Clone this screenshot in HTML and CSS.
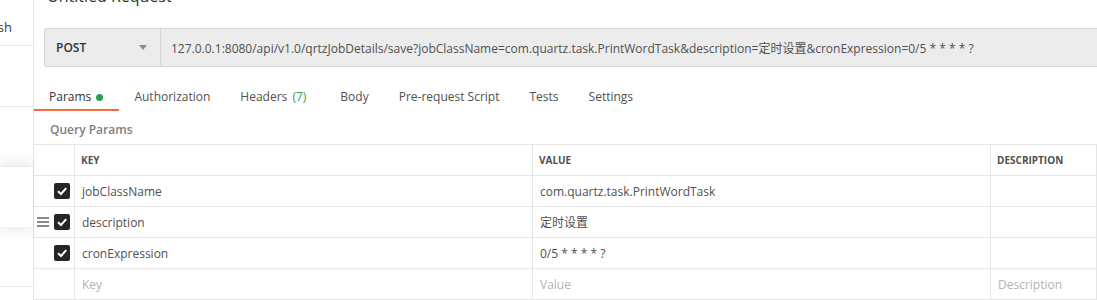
FILE: index.html
```html
<!DOCTYPE html>
<html lang="en">
<head>
  <meta charset="UTF-8">
  <title>Untitled Request</title>
  <link rel="stylesheet" href="styles.css">
</head>
<body>
  <div class="app">
    <!-- left sidebar, mostly hidden -->
    <aside class="sidebar">
      <div class="side-top"><span>Refresh</span></div>
      <div class="side-item"></div>
      <div class="side-gap"></div>
      <div class="side-card"></div>
      <div class="side-gap2"></div>
    </aside>

    <main class="main">
      <h2 class="title">Untitled Request</h2>

      <div class="urlbar">
        <div class="method">
          <span>POST</span>
          <i class="caret"></i>
        </div>
        <div class="url">127.0.0.1:8080/api/v1.0/qrtzJobDetails/save?jobClassName=com.quartz.task.PrintWordTask&amp;description=定时设置&amp;cronExpression=0/5 * * * * ?</div>
      </div>

      <ul class="tabs">
        <li class="active">Params <span class="dot"></span></li>
        <li>Authorization</li>
        <li>Headers <span class="count">(7)</span></li>
        <li>Body</li>
        <li>Pre-request Script</li>
        <li>Tests</li>
        <li>Settings</li>
      </ul>

      <div class="section-label">Query Params</div>

      <div class="params">
        <div class="cell head"></div>
        <div class="cell head">KEY</div>
        <div class="cell head">VALUE</div>
        <div class="cell head">DESCRIPTION</div>

        <div class="cell check"><span class="box"><svg viewBox="0 0 16 16" width="16" height="16"><rect width="16" height="16" rx="2" fill="#262626"/><path d="M4 8.2 L7 11 L12.2 5.2" stroke="#fff" stroke-width="2" fill="none"/></svg></span></div>
        <div class="cell">jobClassName</div>
        <div class="cell">com.quartz.task.PrintWordTask</div>
        <div class="cell"></div>

        <div class="cell check"><span class="handle"><i></i><i></i><i></i></span><span class="box"><svg viewBox="0 0 16 16" width="16" height="16"><rect width="16" height="16" rx="2" fill="#262626"/><path d="M4 8.2 L7 11 L12.2 5.2" stroke="#fff" stroke-width="2" fill="none"/></svg></span></div>
        <div class="cell">description</div>
        <div class="cell">定时设置</div>
        <div class="cell"></div>

        <div class="cell check"><span class="box"><svg viewBox="0 0 16 16" width="16" height="16"><rect width="16" height="16" rx="2" fill="#262626"/><path d="M4 8.2 L7 11 L12.2 5.2" stroke="#fff" stroke-width="2" fill="none"/></svg></span></div>
        <div class="cell">cronExpression</div>
        <div class="cell">0/5 * * * * ?</div>
        <div class="cell"></div>

        <div class="cell check"></div>
        <div class="cell placeholder">Key</div>
        <div class="cell placeholder">Value</div>
        <div class="cell placeholder">Description</div>
      </div>
    </main>
  </div>
</body>
</html>
```

FILE: styles.css
```css
body {
  margin: 0;
  height: 300px;
  overflow: hidden;
  background: #fff;
  font-family: "Open Sans", "Noto Sans CJK SC", sans-serif;
  color: #505050;
}

.app {
  display: flex;
  height: 300px;
}

/* sidebar */
.sidebar {
  width: 33px;
  flex-shrink: 0;
  border-right: 1px solid #e3e3e3;
  background: #fff;
}

.side-top {
  height: 46px;
  box-sizing: border-box;
  border-bottom: 1px solid #e8e8e8;
  display: flex;
  justify-content: flex-end;
  align-items: center;
  padding: 8px 21px 0 0;
  overflow: hidden;
  font-size: 13px;
  color: #3a3a3a;
  white-space: nowrap;
}

.side-item {
  height: 60px;
  border-bottom: 1px solid #e8e8e8;
}

.side-gap {
  height: 59px;
}

.side-card {
  height: 60px;
  border-top: 1px solid #e8e8e8;
  background: #fff;
  box-shadow: 0 0 18px rgba(0, 0, 0, 0.12);
}

.side-gap2 {
  height: 59px;
  border-bottom: 1px solid #e8e8e8;
}

/* main panel */
.main {
  flex: 1;
  min-width: 0;
  background: #fff;
  overflow: hidden;
}

.title {
  margin: -14px 0 0 13px;
  font-size: 16px;
  line-height: 20px;
  font-weight: 400;
  color: #333;
}

.urlbar {
  display: flex;
  height: 39px;
  box-sizing: border-box;
  margin: 22px -4px 0 10px;
  background: #ececec;
  border: 1px solid #d6d6d6;
  border-right: 0;
  border-radius: 3px 0 0 3px;
  font-size: 12px;
}

.method {
  width: 116px;
  flex-shrink: 0;
  border-right: 1px solid #d6d6d6;
  display: flex;
  align-items: center;
  justify-content: space-between;
  padding: 0 13px 0 11px;
  box-sizing: border-box;
  font-weight: 600;
  color: #333;
}

.caret {
  width: 0;
  height: 0;
  border-left: 4px solid transparent;
  border-right: 4px solid transparent;
  border-top: 5px solid #8a8a8a;
}

.url {
  display: flex;
  align-items: center;
  padding-left: 10px;
  white-space: pre;
  color: #505050;
}

/* tabs */
.tabs {
  display: flex;
  list-style: none;
  margin: 18px 0 0 0;
  padding: 0;
  font-size: 12px;
}

.tabs li {
  padding: 0 15px;
  line-height: 24px;
  border-bottom: 2px solid transparent;
  white-space: nowrap;
}

.tabs li.active {
  padding-right: 16px;
  border-bottom-color: #f26b3a;
  color: #333;
}

.dot {
  display: inline-block;
  width: 7px;
  height: 7px;
  margin-left: 2px;
  border-radius: 50%;
  background: #26a04a;
  vertical-align: 0;
}

.count {
  margin-left: 2px;
  color: #2e9e55;
}

.tabs li:nth-child(3) {
  padding-right: 19px;
}

.section-label {
  padding: 11px 0 6px 16px;
  line-height: 16px;
  font-size: 12px;
  font-weight: 600;
  color: #808080;
}

/* params table */
.params {
  display: grid;
  grid-template-columns: 41px 458px 458px 1fr;
  border-top: 1px solid #e6e6e6;
  font-size: 12px;
}

.cell {
  height: 31px;
  box-sizing: border-box;
  border-right: 1px solid #e6e6e6;
  border-bottom: 1px solid #e6e6e6;
  display: flex;
  align-items: center;
  padding-left: 7px;
  white-space: nowrap;
  color: #505050;
}

.cell.head {
  font-size: 10px;
  font-weight: 700;
  padding-left: 6px;
  color: #505050;
}

.cell.check {
  justify-content: flex-end;
  padding: 0 4px 0 0;
  gap: 5px;
}

.box {
  display: flex;
}

.handle {
  display: flex;
  flex-direction: column;
  gap: 2px;
  width: 12px;
}

.handle i {
  display: block;
  height: 2px;
  background: #8a8a8a;
}

.placeholder {
  color: #b3b3b3;
}
```
